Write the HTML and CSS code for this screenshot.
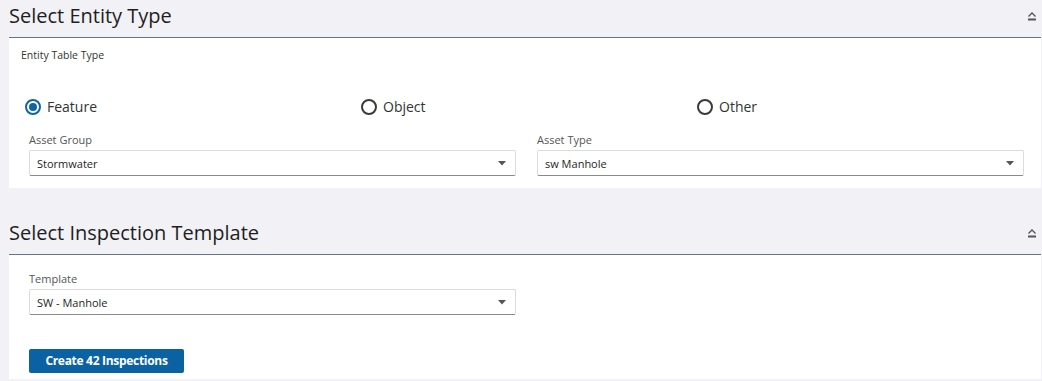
FILE: index.html
```html
<!DOCTYPE html>
<html>
<head>
<meta charset="utf-8">
<link rel="stylesheet" href="styles.css">
</head>
<body>
<div class="page">
  <div class="section-head">
    <h2 class="section-title">Select Entity Type</h2>
    <svg class="collapse" width="10" height="10" viewBox="0 0 10 10"><path d="M1.5 5.5 L5 2 L8.5 5.5" fill="none" stroke="#555" stroke-width="1.3"/><rect x="1" y="7.5" width="8" height="2" fill="#555"/></svg>
  </div>
  <div class="panel panel-entity">
    <div class="small-label">Entity Table Type</div>
    <div class="radio-row">
      <label class="radio"><span class="radio-circle checked"></span><span class="radio-text">Feature</span></label>
      <label class="radio"><span class="radio-circle"></span><span class="radio-text">Object</span></label>
      <label class="radio"><span class="radio-circle"></span><span class="radio-text">Other</span></label>
    </div>
    <div class="select-row">
      <div class="field">
        <div class="field-label">Asset Group</div>
        <div class="select"><span class="select-value">Stormwater</span><svg class="caret" width="8" height="5" viewBox="0 0 8 5"><path d="M0 0 H8 L4 4.5 Z" fill="#555"/></svg></div>
      </div>
      <div class="field">
        <div class="field-label">Asset Type</div>
        <div class="select"><span class="select-value">sw Manhole</span><svg class="caret" width="8" height="5" viewBox="0 0 8 5"><path d="M0 0 H8 L4 4.5 Z" fill="#555"/></svg></div>
      </div>
    </div>
  </div>

  <div class="section-head second">
    <h2 class="section-title">Select Inspection Template</h2>
    <svg class="collapse" width="10" height="10" viewBox="0 0 10 10"><path d="M1.5 5.5 L5 2 L8.5 5.5" fill="none" stroke="#555" stroke-width="1.3"/><rect x="1" y="7.5" width="8" height="2" fill="#555"/></svg>
  </div>
  <div class="panel panel-template">
    <div class="select-row">
      <div class="field">
        <div class="field-label">Template</div>
        <div class="select"><span class="select-value">SW - Manhole</span><svg class="caret" width="8" height="5" viewBox="0 0 8 5"><path d="M0 0 H8 L4 4.5 Z" fill="#555"/></svg></div>
      </div>
    </div>
    <div class="actions">
      <button class="btn-primary">Create 42 Inspections</button>
    </div>
  </div>
</div>
</body>
</html>
```

FILE: styles.css
```css
html, body {
  margin: 0;
  padding: 0;
  background: #f2f1f6;
  font-family: "Open Sans", "Noto Sans", sans-serif;
  color: #333;
}

.page {
  padding: 0 1px 0 9px;
}

.section-head {
  height: 37px;
  border-bottom: 1px solid #5f7787;
  display: flex;
  justify-content: space-between;
  align-items: flex-start;
  padding-right: 4px;
}

.section-head.second {
  margin-top: 29px;
}

.section-title {
  margin: 0;
  padding-top: 2px;
  font-size: 20px;
  line-height: 28px;
  font-weight: 500;
  color: #1e1e1e;
}

.collapse {
  margin-top: 11px;
}

.panel {
  background: #fff;
}

.panel-entity {
  height: 150px;
  box-sizing: border-box;
  padding: 10px 17px 0 12px;
}

.small-label {
  font-size: 10.5px;
  line-height: 15px;
  color: #333;
}

.radio-row {
  display: grid;
  grid-template-columns: repeat(3, 336px);
  margin-top: 34px;
  height: 20px;
  align-items: center;
}

.radio {
  display: flex;
  align-items: center;
  padding-left: 4px;
}

.radio-circle {
  width: 16px;
  height: 16px;
  box-sizing: border-box;
  border: 2px solid #3a3a3a;
  border-radius: 50%;
  display: flex;
  align-items: center;
  justify-content: center;
}

.radio-circle.checked {
  border: 2px solid #0e65a3;
}

.radio-circle.checked::after {
  content: "";
  width: 8px;
  height: 8px;
  border-radius: 50%;
  background: #0e65a3;
}

.radio-text {
  margin-left: 6px;
  font-size: 14px;
  line-height: 20px;
  color: #333;
}

.select-row {
  display: grid;
  grid-template-columns: 487px 487px;
  column-gap: 21px;
  padding-left: 8px;
  margin-top: 15px;
}

.field-label {
  font-size: 11px;
  line-height: 15px;
  color: #555;
  margin-bottom: 3px;
}

.select {
  height: 26px;
  box-sizing: border-box;
  border: 1px solid #dcdcdc;
  border-bottom: 1px solid #8a8a8a;
  border-radius: 2px;
  display: flex;
  align-items: center;
  justify-content: space-between;
  padding: 0 9px 0 7px;
}

.select-value {
  font-size: 11px;
  font-weight: 500;
  color: #1e1e1e;
}

.panel-template {
  height: 124px;
  box-sizing: border-box;
  padding: 0 17px 0 12px;
}

.panel-template .select-row {
  margin-top: 0;
  padding-top: 16px;
}

.actions {
  padding-left: 8px;
  margin-top: 33px;
}

.btn-primary {
  height: 24px;
  width: 155px;
  border: none;
  border-radius: 2px;
  background: #0b62a3;
  color: #fff;
  font-family: "Open Sans", "Noto Sans", sans-serif;
  font-size: 12px;
  font-weight: 700;
  letter-spacing: -0.3px;
  padding: 0;
}
```
